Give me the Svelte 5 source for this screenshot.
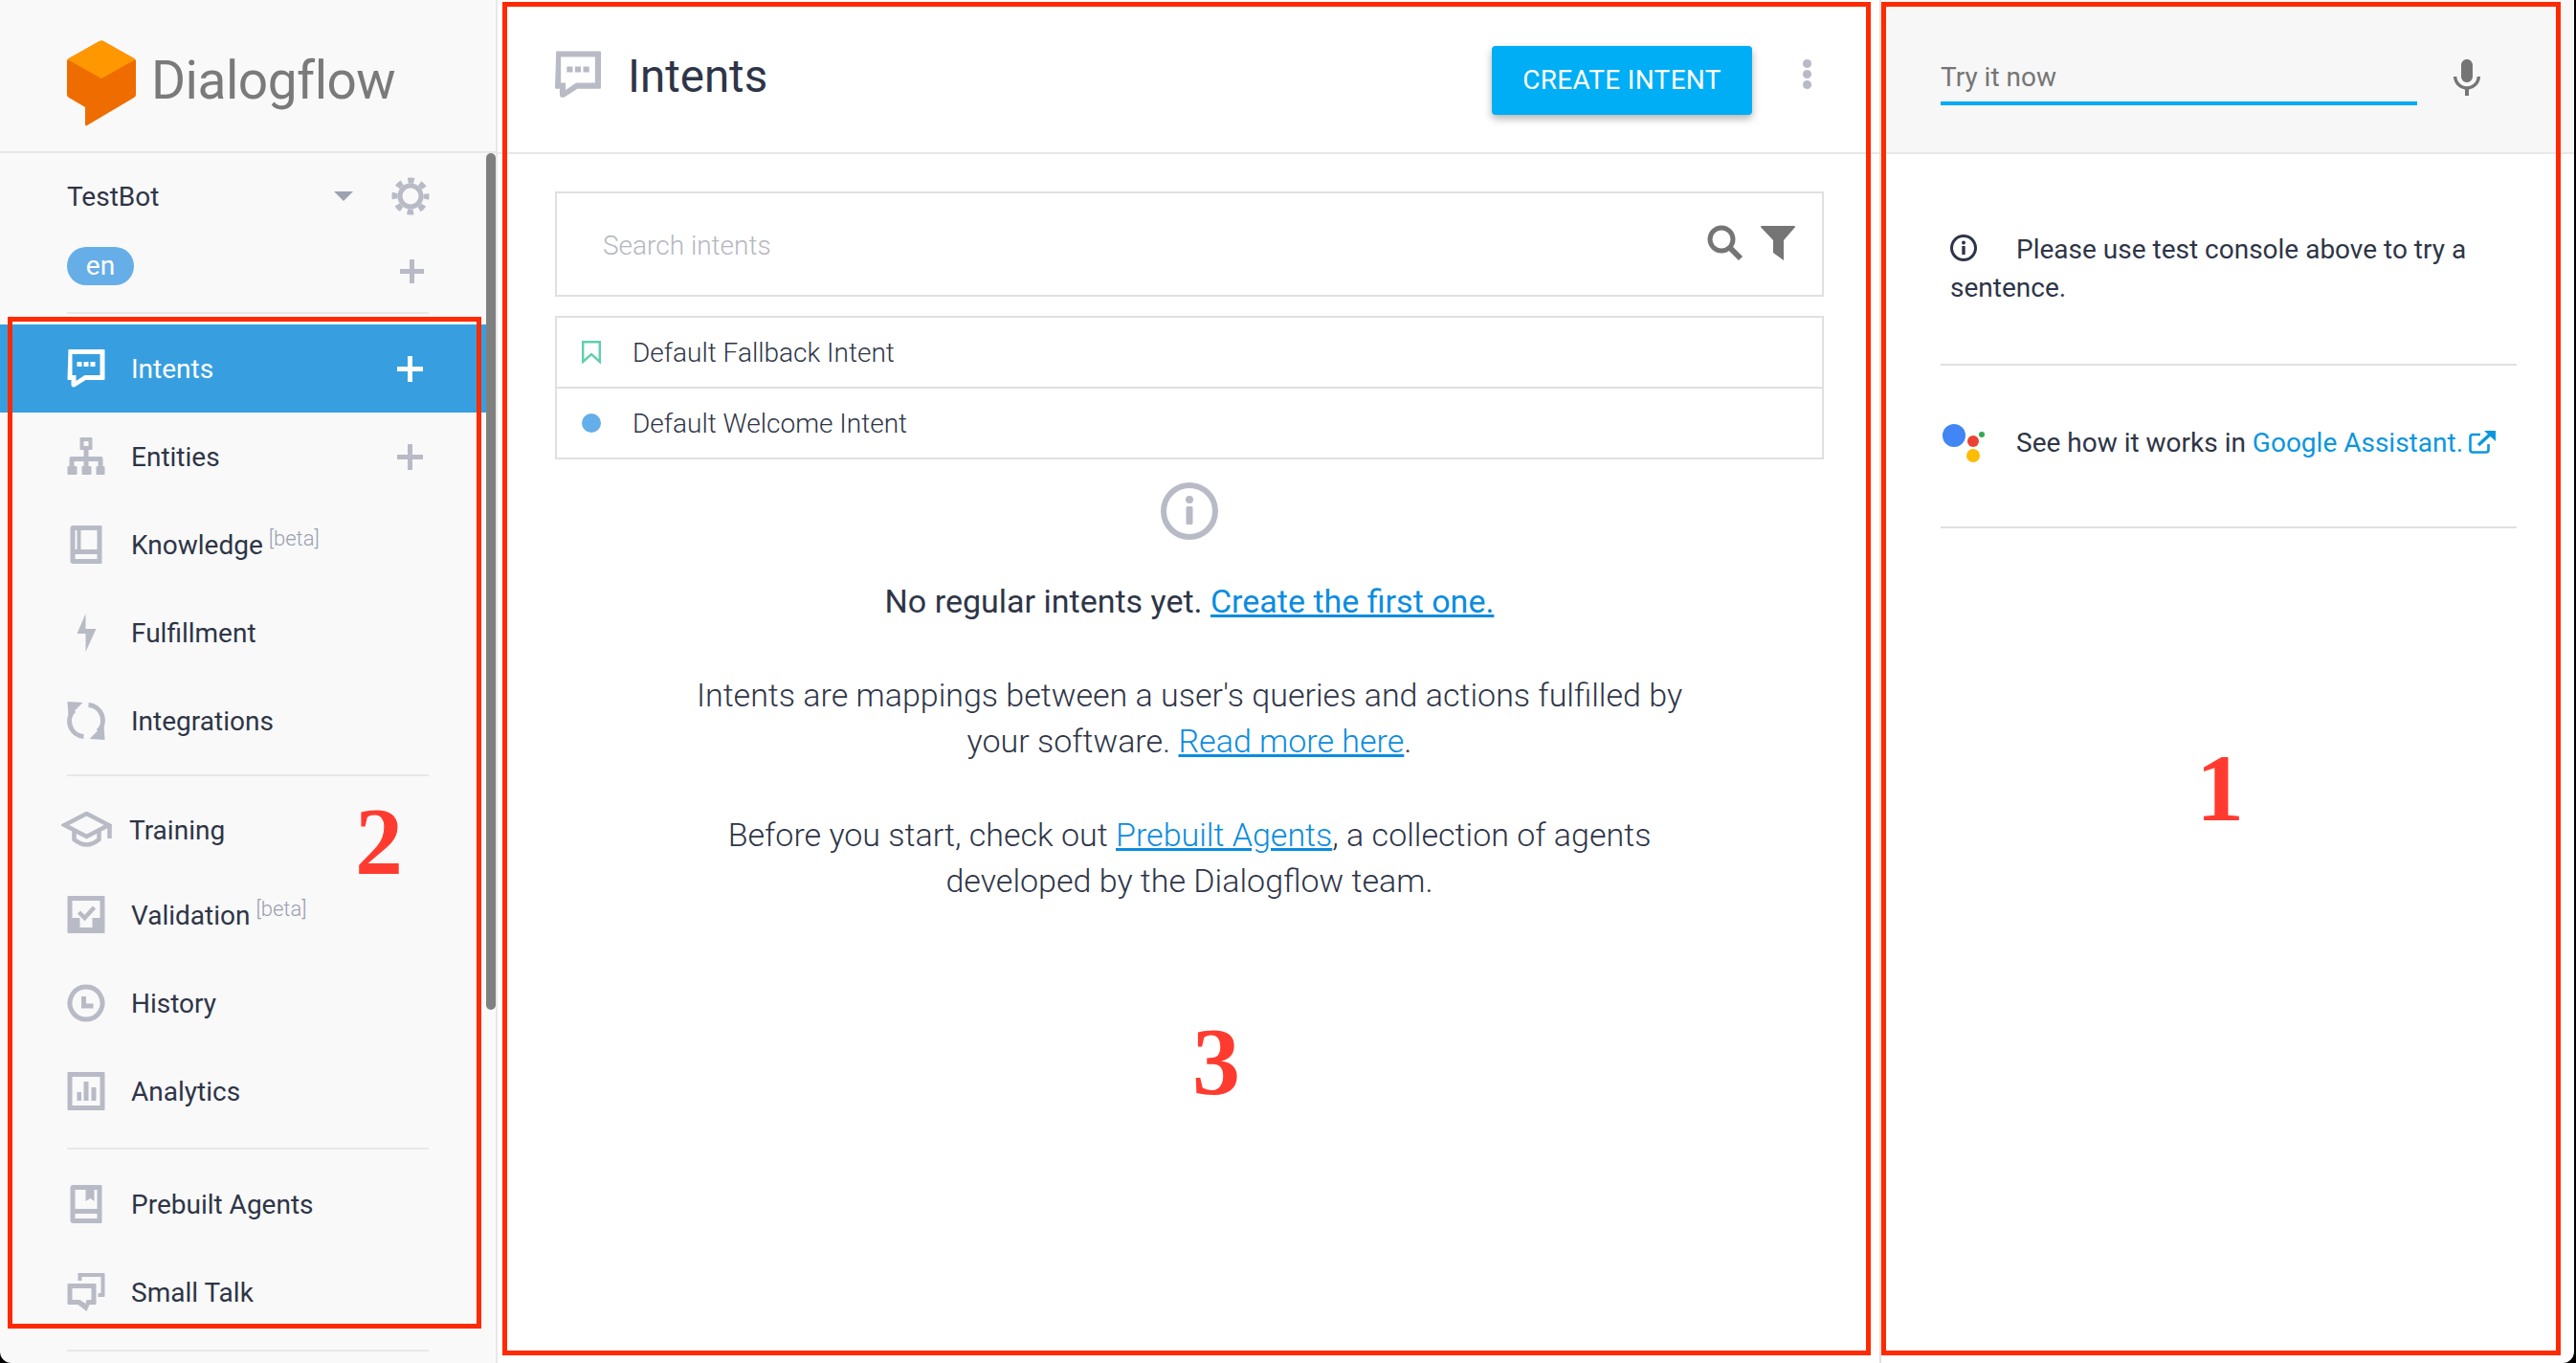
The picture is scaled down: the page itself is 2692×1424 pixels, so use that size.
<script>
  const chat = 'M1 0H38a1 1 0 0 1 1 1V31a1 1 0 0 1-1 1H19L8 39c-2 1-4 0-4-2V32H1a1 1 0 0 1-1-1ZM5 5V27H9V33L18 27H34V5ZM10 13h5v5h-5ZM17 13h5v5h-5ZM24 13h5v5h-5Z';

  const navTop = [
    { label: 'Intents', active: true, plus: true, d: chat },
    { label: 'Entities', plus: true, d: 'M14 0H25a1 1 0 0 1 1 1V12a1 1 0 0 1-1 1H22V20H35a2 2 0 0 1 2 2V30H38a1 1 0 0 1 1 1V38a1 1 0 0 1-1 1H31a1 1 0 0 1-1-1V31a1 1 0 0 1 1-1H32V25H22V30H24a1 1 0 0 1 1 1V38a1 1 0 0 1-1 1H16a1 1 0 0 1-1-1V31a1 1 0 0 1 1-1H17V25H7V30H9a1 1 0 0 1 1 1V38a1 1 0 0 1-1 1H1a1 1 0 0 1-1-1V31a1 1 0 0 1 1-1H2V22a2 2 0 0 1 2-2H17V13H14a1 1 0 0 1-1-1V1a1 1 0 0 1 1-1ZM17 4V9H22V4Z' },
    { label: 'Knowledge', beta: true, d: 'M6 0H35a1 1 0 0 1 1 1V39a1 1 0 0 1-1 1H6a3 3 0 0 1-3-3V3a3 3 0 0 1 3-3ZM14 5V25H31V5ZM8 5V25H10V5ZM8 30V35H31V30Z' },
    { label: 'Fulfillment', d: 'M19 0L10 21H19V40L30 16H19Z' },
    { label: 'Integrations', sw: 5, d: 'M0 0L16 1L1 16ZM39 40L23 39L38 24Z', sd: 'M7 9A16 16 0 0 0 17 36.500M22 3.500A16 16 0 0 1 32 31' }
  ];

  const navMid = [
    { label: 'Training', training: true, vb: '0 0 52 38', w: 53, h: 38, sd: 'M26 2L3 14L26 26L49 14ZM13 20V29Q26 40 39 29V20M50 14V28' },
    { label: 'Validation', beta: true, d: 'M1 0H38a1 1 0 0 1 1 1V38a1 1 0 0 1-1 1H1a1 1 0 0 1-1-1V1a1 1 0 0 1 1-1ZM5 5V23H13V33H26V23H34V5Z', sd: 'M12 17L18 23L28 12' },
    { label: 'History', sw: 5, sd: 'M19.500 3A17 17 0 1 0 19.501 3ZM17 13V23H27' },
    { label: 'Analytics', d: 'M1 0H38a1 1 0 0 1 1 1V39a1 1 0 0 1-1 1H1a1 1 0 0 1-1-1V1a1 1 0 0 1 1-1ZM5 5V35H34V5ZM10 21h4.500v9H10ZM17 10h5v20h-5ZM25 16h5v14h-5Z' }
  ];

  const navBottom = [
    { label: 'Prebuilt Agents', d: 'M6 0H35a1 1 0 0 1 1 1V39a1 1 0 0 1-1 1H6a3 3 0 0 1-3-3V3a3 3 0 0 1 3-3ZM8 5V25H31V5H28V17L24 14L19 17V5ZM8 30V35H31V30Z' },
    { label: 'Small Talk', d: 'M1 11H29a1 1 0 0 1 1 1V32a1 1 0 0 1-1 1H23L20 40L11 33H1a1 1 0 0 1-1-1V12a1 1 0 0 1 1-1ZM5 16V28H13L19 32L20 28H25V16ZM11 0H38a1 1 0 0 1 1 1V24a1 1 0 0 1-1 1H32V21H35V4H15V8H11Z' }
  ];
</script>

{#snippet navRow(item)}
  <div class="nav-row" class:active={item.active} class:training={item.training}>
    <svg class="nav-icon" width={item.w ?? 40} height={item.h ?? 40} viewBox={item.vb ?? '0 0 39 40'}>
      {#if item.d}<path d={item.d} fill="currentColor" fill-rule="evenodd" />{/if}
      {#if item.sd}<path d={item.sd} fill="none" stroke="currentColor" stroke-width={item.sw ?? 4.5} />{/if}
    </svg>
    <span>{item.label}</span>
    {#if item.beta}<sup>[beta]</sup>{/if}
    {#if item.plus}<i class="plus"></i>{/if}
  </div>
{/snippet}

<div class="page">
  <aside class="sidebar">
    <div class="brand">
      <svg width="72" height="90" viewBox="0 0 72 90">
        <path d="M34 1Q36 0 38 1L70 19Q72 20 72 22V57Q72 59 70 60L21 89Q19 90 19 88V70L2 60Q0 59 0 57V22Q0 20 2 19Z" fill="#ef6c00" />
        <path d="M34 1Q36 0 38 1L70 19Q72 20 70 21L36 40L2 21Q0 20 2 19Z" fill="#ff9800" />
      </svg>
      <span class="wordmark">Dialogflow</span>
    </div>

    <div class="agent">
      <span>TestBot</span>
      <i class="caret"></i>
      <svg class="gear" width="40" height="40" viewBox="0 0 40 40">
        <circle cx="20" cy="20" r="11" fill="none" stroke="#b8bbc6" stroke-width="5" />
        <circle cx="20" cy="20" r="16.500" fill="none" stroke="#b8bbc6" stroke-width="6" stroke-dasharray="6.500 6.460" stroke-dashoffset="3.250" />
      </svg>
    </div>

    <div class="lang">
      <span class="pill">en</span>
      <i class="plus small"></i>
    </div>

    <hr class="first" />
    {#each navTop as item}{@render navRow(item)}{/each}
    <hr class="second" />
    {#each navMid as item}{@render navRow(item)}{/each}
    <hr class="third" />
    {#each navBottom as item}{@render navRow(item)}{/each}
    <hr class="fourth" />

    <div class="scrollbar"></div>
  </aside>

  <main class="main">
    <header class="main-head">
      <svg class="head-icon" width="48" height="50" viewBox="0 0 39 40"><path d={chat} fill="#b8bbc6" fill-rule="evenodd" /></svg>
      <h1>Intents</h1>
      <button class="create">CREATE INTENT</button>
      <div class="dots"><i></i><i></i><i></i></div>
    </header>

    <div class="body">
      <div class="search">
        <span>Search intents</span>
        <svg width="38" height="38" viewBox="0 0 38 38"><circle cx="15" cy="15" r="12" fill="none" stroke="#757575" stroke-width="5" /><path d="M24 24L35 35" stroke="#757575" stroke-width="6" /></svg>
        <svg width="36" height="36" viewBox="0 0 36 36"><path d="M1 0H35a1 1 0 0 1 .8 1.600L24 15V36L13 28V15L.2 1.600A1 1 0 0 1 1 0Z" fill="#757575" /></svg>
      </div>

      <div class="list">
        <div class="item">
          <svg width="20" height="24" viewBox="0 0 20 24"><path d="M1.200 1.200H18.800V22L10 14L1.200 22Z" fill="none" stroke="#5fcfb0" stroke-width="2.400" /></svg>
          <span>Default Fallback Intent</span>
        </div>
        <div class="item">
          <svg width="20" height="20" viewBox="0 0 20 20"><circle cx="10" cy="10" r="10" fill="#64aeea" /></svg>
          <span>Default Welcome Intent</span>
        </div>
      </div>

      <div class="empty">
        <svg width="60" height="60" viewBox="0 0 60 60">
          <circle cx="30" cy="30" r="27" fill="none" stroke="#b8bbc6" stroke-width="6" />
          <circle cx="30" cy="18" r="4" fill="#b8bbc6" />
          <rect x="26.500" y="25" width="7" height="19" rx="1.500" fill="#b8bbc6" />
        </svg>
        <p class="lead">No regular intents yet. <a href="#create">Create the first one.</a></p>
        <p>Intents are mappings between a user's queries and actions fulfilled by your software. <a href="#more">Read more here</a>.</p>
        <p>Before you start, check out <a href="#agents">Prebuilt Agents</a>, a collection of agents developed by the Dialogflow team.</p>
      </div>
    </div>
  </main>

  <section class="console">
    <div class="try">
      <div class="try-input">Try it now</div>
      <svg width="28" height="38" viewBox="5 2 14 19"><path d="M12 14c1.660 0 2.990-1.340 2.990-3L15 5c0-1.660-1.340-3-3-3S9 3.340 9 5v6c0 1.660 1.340 3 3 3zm5.300-3c0 3-2.540 5.100-5.300 5.100S6.700 14 6.700 11H5c0 3.410 2.720 6.230 6 6.720V21h2v-3.280c3.280-.480 6-3.300 6-6.720h-1.700z" fill="#757575" /></svg>
    </div>
    <div class="note">
      <svg width="28" height="28" viewBox="0 0 28 28">
        <circle cx="14" cy="14" r="12.500" fill="none" stroke="#2e3547" stroke-width="3" />
        <circle cx="14" cy="8.500" r="2" fill="#2e3547" />
        <rect x="12.300" y="12" width="3.400" height="9" fill="#2e3547" />
      </svg>Please use test console above to try a sentence.
    </div>
    <div class="assistant">
      <svg class="ga" width="50" height="46" viewBox="0 0 50 46">
        <circle cx="14" cy="16" r="12" fill="#4285f4" />
        <circle cx="34" cy="22" r="6" fill="#ea4335" />
        <circle cx="43" cy="15" r="3" fill="#34a853" />
        <circle cx="34" cy="37" r="7" fill="#fbbc04" />
      </svg>
      <span>See how it works in <a href="#assistant">Google Assistant.</a></span>
      <svg class="ext" width="28" height="25" viewBox="0 0 28 25">
        <path d="M12 4H4a2.500 2.500 0 0 0-2.500 2.500V20A2.500 2.500 0 0 0 4 22.500H18A2.500 2.500 0 0 0 20.500 20V14" fill="none" stroke="#0b96e0" stroke-width="2.600" />
        <path d="M10 15L22 4" stroke="#0b96e0" stroke-width="3.400" />
        <path d="M16 0H28V11Z" fill="#0b96e0" />
      </svg>
    </div>
  </section>

  <!-- review markings drawn over the screenshot -->
  <div class="mark box-one"></div>
  <div class="mark box-two"></div>
  <div class="mark box-three"></div>
  <span class="num num-one">1</span>
  <span class="num num-two">2</span>
  <span class="num num-three">3</span>
  <div class="frame"></div>
</div>

<style>
  :global(body) { margin: 0; background: #fff; }

  .page {
    position: relative;
    display: flex;
    width: 2692px;
    height: 1424px;
    overflow: hidden;
    font-family: Roboto, sans-serif;
    font-size: 28px;
    color: #2e3547;
  }

  .sidebar {
    position: relative;
    flex: none;
    width: 518px;
    height: 1424px;
    background: #f9f9f9;
    border-right: 2px solid #e8e8e8;
  }

  .brand {
    display: flex;
    align-items: flex-start;
    gap: 16px;
    box-sizing: border-box;
    height: 160px;
    padding: 42px 0 0 70px;
    border-bottom: 2px solid #e8e8e8;
  }
  .wordmark { margin-top: 10px; font-size: 55px; color: #7a7a7a; letter-spacing: -.5px; }

  .agent {
    display: flex;
    align-items: center;
    height: 40px;
    margin-top: 25px;
    padding-left: 70px;
  }
  .caret {
    margin-left: auto;
    border-left: 10px solid transparent;
    border-right: 10px solid transparent;
    border-top: 10px solid #9da1b1;
  }
  .gear { margin: 0 69px 0 40px; }

  .lang {
    display: flex;
    align-items: center;
    justify-content: space-between;
    margin-top: 33px;
    padding: 0 75px 0 70px;
  }
  .pill {
    width: 70px;
    height: 40px;
    line-height: 39px;
    text-align: center;
    border-radius: 20px;
    background: #66aee8;
    color: #fff;
  }

  hr { height: 2px; margin: 0 70px; border: 0; background: #e8e8e8; }
  hr.first { margin-top: 28px; margin-bottom: 11px; }
  hr.second { margin-top: 10px; margin-bottom: 10px; }
  hr.third { margin-top: 13px; margin-bottom: 11px; }
  hr.fourth { margin-top: 14px; }

  .nav-row {
    position: relative;
    display: flex;
    align-items: center;
    gap: 27px;
    height: 92px;
    padding-left: 70px;
  }
  .nav-row .nav-icon { flex: none; color: #b8bbc6; }
  .nav-row.active { background: #379fe0; color: #fff; }
  .nav-row.active .nav-icon { color: #fff; }
  .nav-row.training { margin-bottom: -3px; padding-left: 64px; gap: 18px; }
  sup { margin: -14px 0 0 -21px; font-size: 22px; font-weight: 300; color: #9a9fb0; align-self: center; }

  .plus {
    position: relative;
    display: block;
    width: 27px;
    height: 27px;
    margin-left: auto;
    margin-right: 76px;
    color: #b8bbc6;
    background:
      linear-gradient(currentColor, currentColor) center / 100% 5px no-repeat,
      linear-gradient(currentColor, currentColor) center / 5px 100% no-repeat;
  }
  .active .plus { color: #fff; }
  .plus.small { width: 25px; height: 25px; margin: 10px 0 0; }

  .scrollbar {
    position: absolute;
    top: 160px;
    left: 508px;
    width: 10px;
    height: 895px;
    border-radius: 5px;
    background: #808080;
  }

  .main {
    flex: none;
    width: 1444px;
    height: 1424px;
    border-right: 2px solid #e0e0e0;
  }
  .main-head {
    display: flex;
    align-items: center;
    box-sizing: border-box;
    height: 161px;
    padding: 0 0 0 60px;
    border-bottom: 2px solid #e8e8e8;
  }
  .head-icon { margin: -3px 0 0; }
  h1 { margin: 0 0 0 28px; font-size: 47.500px; font-weight: 400; }
  .create {
    margin: 8px 0 0 auto;
    width: 272px;
    height: 72px;
    border: 0;
    border-radius: 4px;
    background: #00aef5;
    color: #fff;
    font: 400 28px Roboto, sans-serif;
    letter-spacing: .3px;
    box-shadow: 0 4px 8px rgba(0, 0, 0, .3);
  }
  .dots { display: flex; flex-direction: column; gap: 2.500px; margin: -4px 71px 0 53px; }
  .dots i { width: 9px; height: 8.500px; border-radius: 50%; background: #b8bbc6; }

  .body { padding: 39px 58px 0 60px; }

  .search {
    display: flex;
    align-items: center;
    gap: 18px;
    box-sizing: border-box;
    height: 110px;
    padding: 0 28px 2px 48px;
    border: 2px solid #e0e0e0;
  }
  .search span { margin: 5px auto 0 0; font-weight: 300; color: #b4b7c0; }

  .list { margin-top: 20px; border: 2px solid #e0e0e0; }
  .item {
    display: flex;
    align-items: center;
    gap: 33px;
    height: 72px;
    padding-left: 26px;
    font-weight: 300;
  }
  .item + .item { border-top: 2px solid #e0e0e0; }
  .item svg { flex: none; }

  .empty { display: flex; flex-direction: column; align-items: center; padding-top: 24px; text-align: center; }
  .empty p { margin: 50px 0 0; width: 1060px; font-size: 34px; font-weight: 300; line-height: 48px; }
  .empty p.lead { margin-top: 40px; font-weight: 400; }
  .empty a { color: #0a8ce0; }

  .console { flex: 1; }
  .try {
    display: flex;
    align-items: flex-start;
    gap: 38px;
    box-sizing: border-box;
    height: 161px;
    padding: 0 0 0 62px;
    background: #f7f7f7;
    border-bottom: 2px solid #e8e8e8;
  }
  .try-input {
    box-sizing: border-box;
    width: 498px;
    height: 68px;
    margin-top: 42px;
    padding-top: 22px;
    color: #757575;
    border-bottom: 4px solid #03a9f4;
  }
  .try svg { margin-top: 62px; }

  .note {
    box-sizing: border-box;
    width: 602px;
    height: 221px;
    margin-left: 62px;
    padding: 80px 0 0 10px;
    line-height: 40px;
    font-weight: 400;
    border-bottom: 2px solid #e0e0e0;
  }
  .note svg { margin-right: 41px; vertical-align: -3px; }

  .assistant {
    display: flex;
    align-items: center;
    box-sizing: border-box;
    width: 602px;
    height: 170px;
    margin-left: 62px;
    padding-bottom: 8px;
    border-bottom: 2px solid #e0e0e0;
  }
  .ga { flex: none; margin: 0 29px 0 0; }
  .assistant a { color: #0b96e0; text-decoration: none; }
  .ext { margin: 0 0 0 6px; }

  .mark { position: absolute; box-sizing: border-box; border: 5px solid #ff2a00; }
  .box-one { left: 1966px; top: 2px; width: 710px; height: 1414px; }
  .box-two { left: 8px; top: 331px; width: 495px; height: 1057px; }
  .box-three { left: 525px; top: 2px; width: 1430px; height: 1414px; }

  .num {
    position: absolute;
    font: 700 100px/1 "Liberation Serif", serif;
    color: #ff3b30;
    transform: translate(-50%, -50%);
  }
  .num-one { left: 2320px; top: 824px; }
  .num-two { left: 396px; top: 879px; }
  .num-three { left: 1271px; top: 1109px; }

  .frame {
    position: absolute;
    inset: 0 2px 0 0;
    border-radius: 0 0 12px 12px;
    box-shadow: 0 0 0 20px #000;
    pointer-events: none;
  }
</style>
